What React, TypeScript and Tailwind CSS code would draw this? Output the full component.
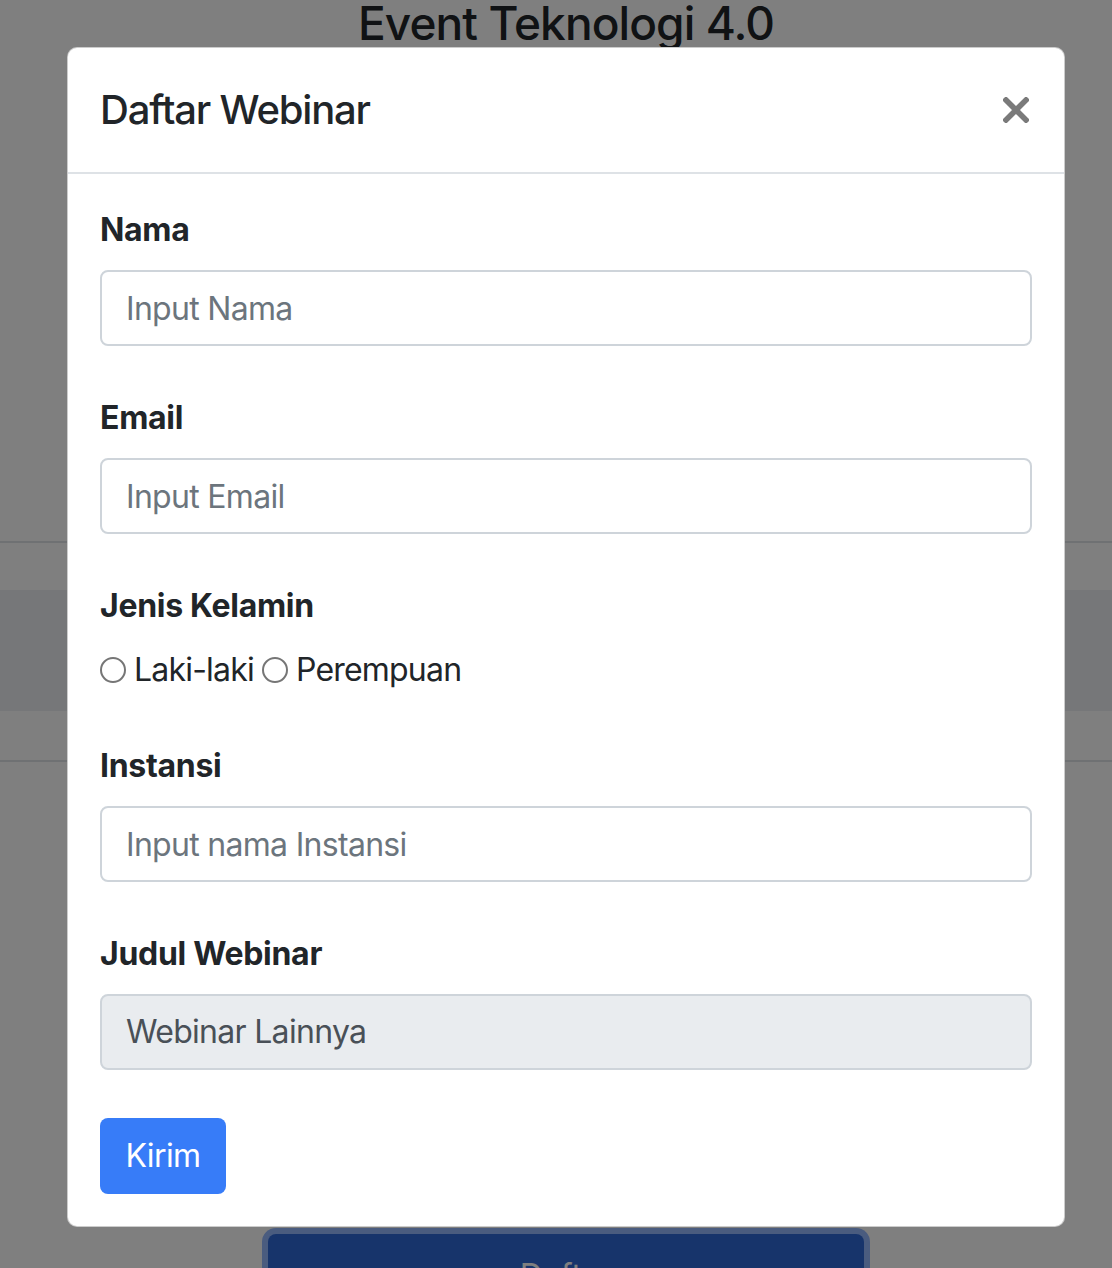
import { useState } from 'react';

const FONT = { fontFamily: 'Inter, "Noto Sans", sans-serif' };

function Field({ label, placeholder, value }: { label: string; placeholder?: string; value?: string }) {
  return (
    <div className="mb-12">
      <label className="mb-4 block text-[32px] font-bold leading-[48px] tracking-[-0.3px] text-[#212529]">{label}</label>
      {value ? (
        <div className="flex h-[76px] w-full items-center rounded-[8px] border-2 border-[#ced4da] bg-[#e9ecef] px-6 text-[32px] tracking-[-0.7px] text-[#495057]">
          {value}
        </div>
      ) : (
        <input
          placeholder={placeholder}
          className="h-[76px] w-full rounded-[8px] border-2 border-[#ced4da] bg-white px-6 text-[32px] tracking-[-0.7px] text-[#495057] outline-none placeholder:text-[#6c757d]"
        />
      )}
    </div>
  );
}

function Radio({ label, checked, onClick }: { label: string; checked: boolean; onClick: () => void }) {
  return (
    <button type="button" onClick={onClick} className="flex items-center gap-2">
      <span className="flex h-[26px] w-[26px] items-center justify-center rounded-full border-2 border-[#767676] bg-white">
        {checked && <span className="h-[14px] w-[14px] rounded-full bg-[#1a73e8]" />}
      </span>
      <span className="text-[32px] leading-[48px] tracking-[-0.8px] text-[#212529]">{label}</span>
    </button>
  );
}

export default function App() {
  const [gender, setGender] = useState('');

  return (
    <div className="relative h-[1268px] w-[1112px] overflow-hidden bg-white" style={FONT}>
      {/* page behind the modal */}
      <div className="flex w-[1132px] flex-col items-center">
        <h4 className="mt-[-5px] text-[46px] font-medium leading-[56px] tracking-[-0.9px] text-[#212529]">Event Teknologi 4.0</h4>
        <div className="mt-[490px] h-[2px] w-full bg-[#dee2e6]" />
        <div className="mt-[47px] h-[121px] w-full bg-[#eceef2]" />
        <div className="mt-[49px] h-[2px] w-full bg-[#dee2e6]" />
        <div className="mt-[466px] rounded-[14px] bg-[#94b8ff] p-[6px]">
          <div className="flex h-[90px] w-[596px] items-start justify-center rounded-[8px] bg-[#2e68d6] pt-[18px] text-[32px] text-white">
            Daftar
          </div>
        </div>
      </div>

      {/* backdrop + modal */}
      <div className="absolute inset-0 bg-black/50">
        <div className="ml-[67px] mt-[47px] w-[998px] rounded-[10px] border border-black/20 bg-white">
          <div className="flex items-start justify-between border-b-2 border-[#dee2e6] p-8">
            <h5 className="text-[40px] font-medium leading-[60px] tracking-[-1.2px] text-[#212529]">Daftar Webinar</h5>
            <button type="button" className="mt-[14px] p-[3px]" aria-label="Close">
              <svg width="26" height="26" viewBox="0 0 26 26">
                <path d="M3 3 L23 23 M23 3 L3 23" stroke="#7a7a7a" strokeWidth="5.5" strokeLinecap="square" />
              </svg>
            </button>
          </div>
          <div className="p-8">
            <Field label="Nama" placeholder="Input Nama" />
            <Field label="Email" placeholder="Input Email" />
            <div className="mb-12">
              <label className="mb-4 block text-[32px] font-bold leading-[48px] tracking-[-0.3px] text-[#212529]">Jenis Kelamin</label>
              <div className="flex items-center gap-2">
                <Radio label="Laki-laki" checked={gender === 'L'} onClick={() => setGender('L')} />
                <Radio label="Perempuan" checked={gender === 'P'} onClick={() => setGender('P')} />
              </div>
            </div>
            <Field label="Instansi" placeholder="Input nama Instansi" />
            <Field label="Judul Webinar" value="Webinar Lainnya" />
            <button type="button" className="h-[76px] w-[126px] rounded-[8px] bg-[#377cf8] text-[32px] tracking-[-0.6px] text-white">
              Kirim
            </button>
          </div>
        </div>
      </div>
    </div>
  );
}
